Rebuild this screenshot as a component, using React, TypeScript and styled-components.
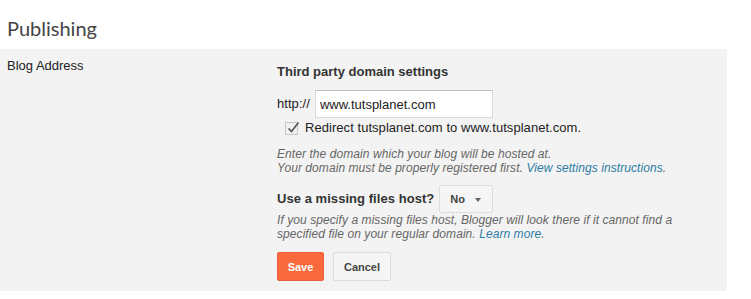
import React from "react";
import styled, { createGlobalStyle } from "styled-components";

const Global = createGlobalStyle`
  html, body { margin: 0; padding: 0; background: #fff; }
  body { font-family: "Liberation Sans", Arial, sans-serif; font-size: 13px; color: #222; }
  * { box-sizing: border-box; }
`;

const Page = styled.div`
  width: 751px;
`;

const Title = styled.h1`
  margin: 0;
  padding: 14px 0 7px 7px;
  height: 49px;
  font-family: Lato, "Open Sans", "Liberation Sans", sans-serif;
  font-weight: 400;
  font-size: 20px;
  line-height: 28px;
  color: #444;
`;

const Panel = styled.section`
  width: 727px;
  background: #f3f3f3;
  display: grid;
  grid-template-columns: 277px 1fr;
  padding: 9px 0 10px 0;
`;

const Label = styled.div`
  padding-left: 7px;
  line-height: 16px;
  color: #222;
`;

const Column = styled.div`
  display: flex;
  flex-direction: column;
  align-items: flex-start;
`;

const Heading = styled.div`
  margin-top: 6px;
  font-weight: 700;
  line-height: 16px;
  color: #333;
`;

const Row = styled.div<{ $mt?: number; $gap?: number; $ml?: number }>`
  display: flex;
  align-items: center;
  gap: ${(p) => p.$gap ?? 5}px;
  margin-top: ${(p) => p.$mt ?? 0}px;
  margin-left: ${(p) => p.$ml ?? 0}px;
  line-height: 16px;
  color: #222;
  letter-spacing: 0.05px;
`;

const Input = styled.input`
  width: 178px;
  height: 28px;
  border: 1px solid #d9d9d9;
  border-top-color: #c0c0c0;
  background: #fff;
  padding: 0 0 0 4px;
  font-family: "Liberation Sans", Arial, sans-serif;
  font-size: 13px;
  color: #222;
  outline: none;
`;

const CheckBox = styled.span`
  width: 13px;
  height: 13px;
  border: 1px solid #c6c6c6;
  background: #f1f1f1;
  position: relative;
  display: inline-block;
  flex: none;
`;

const CheckSvg = styled.svg`
  position: absolute;
  left: 0px;
  top: -3px;
`;

const Help = styled.p<{ $mt?: number }>`
  margin: ${(p) => p.$mt ?? 0}px 0 0 0;
  font-size: 12px;
  line-height: 14px;
  font-style: italic;
  color: #666;
  letter-spacing: 0.07px;
`;

const Link = styled.a`
  color: #2d7ca3;
  text-decoration: none;
`;

const Bold = styled.span`
  font-weight: 700;
  color: #333;
`;

const Select = styled.div`
  width: 54px;
  height: 28px;
  border: 1px solid #dcdcdc;
  background: #f5f5f5;
  border-radius: 2px;
  display: flex;
  align-items: center;
  padding-left: 10px;
  gap: 10px;
  font-size: 11px;
  font-weight: 700;
  color: #444;
`;

const Arrow = styled.span`
  width: 0;
  height: 0;
  border-left: 3.5px solid transparent;
  border-right: 3.5px solid transparent;
  border-top: 4px solid #666;
  margin-top: 1px;
`;

const Buttons = styled.div`
  display: flex;
  gap: 9px;
  margin-top: 11px;
`;

const Button = styled.button<{ $primary?: boolean; $w: number }>`
  width: ${(p) => p.$w}px;
  height: 29px;
  border-radius: 2px;
  border: 1px solid ${(p) => (p.$primary ? "#e8603a" : "#dcdcdc")};
  background: ${(p) => (p.$primary ? "#f8693d" : "#f5f5f5")};
  color: ${(p) => (p.$primary ? "#fff" : "#444")};
  font-family: "Liberation Sans", Arial, sans-serif;
  font-size: 11px;
  font-weight: 700;
  padding: 0;
  cursor: pointer;
`;

export default function App() {
  return (
    <Page>
      <Global />
      <Title>Publishing</Title>
      <Panel>
        <Label>Blog Address</Label>
        <Column>
          <Heading>Third party domain settings</Heading>
          <Row $mt={10}>
            <span>http://</span>
            <Input defaultValue="www.tutsplanet.com" />
          </Row>
          <Row $mt={2} $ml={8} $gap={7}>
            <CheckBox>
              <CheckSvg width="15" height="15" viewBox="0 0 15 15">
                <path d="M2.5 8.5 L5.5 11.5 L12.5 2.5" fill="none" stroke="#555" strokeWidth="1.7" />
              </CheckSvg>
            </CheckBox>
            <span>Redirect tutsplanet.com to www.tutsplanet.com.</span>
          </Row>
          <Help $mt={11}>
            Enter the domain which your blog will be hosted at.
            <br />
            Your domain must be properly registered first. <Link href="#">View settings instructions</Link>.
          </Help>
          <Row $mt={10}>
            <Bold>Use a missing files host?</Bold>
            <Select>
              No <Arrow />
            </Select>
          </Row>
          <Help>
            If you specify a missing files host, Blogger will look there if it cannot find a
            <br />
            specified file on your regular domain. <Link href="#">Learn more</Link>.
          </Help>
          <Buttons>
            <Button $primary $w={47}>Save</Button>
            <Button $w={58}>Cancel</Button>
          </Buttons>
        </Column>
      </Panel>
    </Page>
  );
}
